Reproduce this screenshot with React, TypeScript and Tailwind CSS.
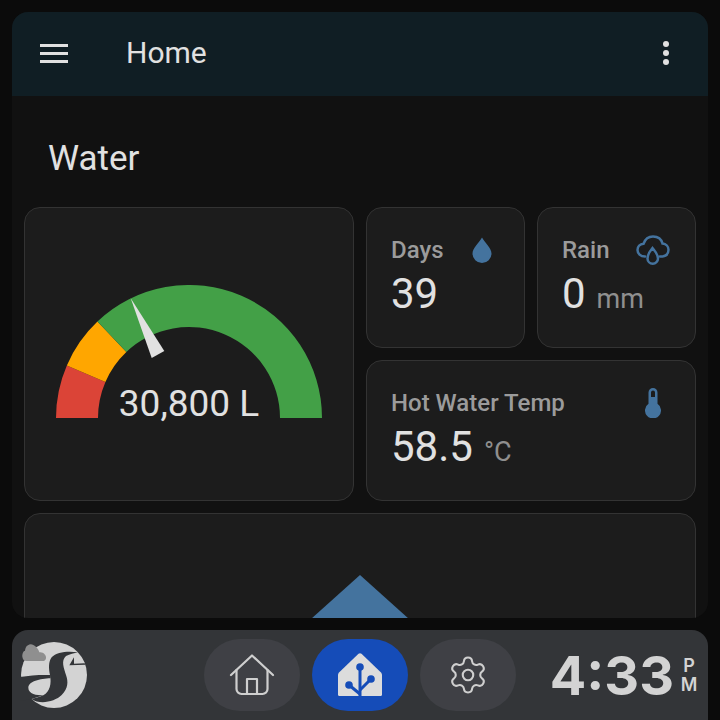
import { Settings } from 'lucide-react';

const font = { roboto: "font-['Roboto',sans-serif]" };

function polar(r: number, deg: number) {
  const a = (deg * Math.PI) / 180;
  return { x: 133 - r * Math.cos(a), y: 133 - r * Math.sin(a) };
}

function arcSegment(from: number, to: number) {
  const R = 133;
  const r = 91;
  const a = polar(R, from);
  const b = polar(R, to);
  const c = polar(r, to);
  const d = polar(r, from);
  return `M${a.x} ${a.y}A${R} ${R} 0 0 1 ${b.x} ${b.y}L${c.x} ${c.y}A${r} ${r} 0 0 0 ${d.x} ${d.y}Z`;
}

function Gauge() {
  return (
    <div className="relative w-[266px] h-[133px]">
      <svg width="266" height="133" viewBox="0 0 266 133" className="block">
        <path d={arcSegment(0, 23.3)} fill="#db4437" />
        <path d={arcSegment(23.3, 46.5)} fill="#ffa600" />
        <path d={arcSegment(46.5, 180)} fill="#43a047" />
        <polygon points="74.7,13.3 95.7,73 108.3,66" fill="#e1e1e1" />
      </svg>
      <div className="absolute left-0 right-0 bottom-[-7px] text-center text-[37px] leading-[42px] text-[#e1e1e1]">
        30,800 L
      </div>
    </div>
  );
}

function Card({ className, children }: { className?: string; children: React.ReactNode }) {
  return (
    <div className={`bg-[#1c1c1c] border border-[#333333] rounded-2xl h-[141px] ${className ?? ''}`}>{children}</div>
  );
}

function StatCard({
  label,
  value,
  unit,
  icon,
  className,
}: {
  label: string;
  value: string;
  unit?: string;
  icon: React.ReactNode;
  className?: string;
}) {
  return (
    <Card className={`px-[24px] pt-[25px] ${className ?? ''}`}>
      <div className="flex items-center justify-between h-[34px]">
        <span className="text-[24px] leading-[34px] font-medium text-[#9b9b9b]">{label}</span>
        {icon}
      </div>
      <div className="flex items-baseline gap-[11px] mt-[3px]">
        <span className="text-[42px] leading-[48px] text-[#e1e1e1]">{value}</span>
        {unit && <span className="text-[27px] leading-[32px] text-[#8f8f8f]">{unit}</span>}
      </div>
    </Card>
  );
}

function DropIcon() {
  return (
    <svg width="20" height="26" viewBox="0 0 20 26" className="mr-[8px]">
      <path d="M10 .500C7 6 .500 11 .500 16.500A9.500 9.500 0 0 0 19.500 16.500C19.500 11 13 6 10 .500Z" fill="#44739e" />
    </svg>
  );
}

function RainCloudIcon() {
  return (
    <svg width="34" height="31" viewBox="0 0 34 31" className="mr-[1px]" fill="none" stroke="#44739e" strokeWidth="2.500">
      <path d="M9 21.500C4.500 21.500 1.500 18.500 1.500 15C1.500 11.500 4 9 7.500 8.800C9 4.500 12.500 1.500 17 1.500C22 1.500 25.500 4.500 26.500 8.500C30 8.800 32.500 11.500 32.500 14.800C32.500 18.500 30 21 26.500 21.500H24" strokeLinecap="round" />
      <path d="M16.500 13C14 16 11.500 19 11.500 23.500A5.200 5.200 0 0 0 22 23.500C22 19 19 16 16.500 13Z" />
    </svg>
  );
}

function ThermometerIcon() {
  return (
    <svg width="16" height="30" viewBox="0 0 16 30" className="mr-[10px]">
      <path
        fillRule="evenodd"
        d="M8 0A4.500 4.500 0 0 0 3.500 4.500V15.800A8 8 0 1 0 12.500 15.800V4.500A4.500 4.500 0 0 0 8 0ZM8 2.500A2 2 0 0 1 10 4.500V9H6V4.500A2 2 0 0 1 8 2.500Z"
        fill="#44739e"
      />
    </svg>
  );
}

function HomeOutline() {
  return (
    <svg width="46" height="46" viewBox="0 0 46 46" fill="none" stroke="#cfcfcf" strokeWidth="2.200" strokeLinecap="round" strokeLinejoin="round">
      <path d="M2 23L23 3.500L44 23" />
      <path d="M7.500 18V37A5 5 0 0 0 12.500 42H33.500A5 5 0 0 0 38.500 37V18" />
      <path d="M18 42V27H28V42" />
    </svg>
  );
}

function HaIcon() {
  return (
    <svg width="44" height="44" viewBox="0 0 44 44">
      <path d="M20.500 .800Q22 -.200 23.500 .800L43 19.500Q44 20.500 44 22V41.500Q44 43 42.500 43H1.500Q0 43 0 41.500V22Q0 20.500 1 19.500Z" fill="#dcdcdc" />
      <g stroke="#154cb8" strokeWidth="3" fill="none">
        <path d="M22 14V43" />
        <path d="M11 32L22 41" />
        <path d="M33 26L22 37" />
      </g>
      <circle cx="22" cy="14" r="3.800" fill="#154cb8" />
      <circle cx="11" cy="32" r="3.800" fill="#154cb8" />
      <circle cx="33" cy="26" r="3.800" fill="#154cb8" />
    </svg>
  );
}

function Logo() {
  return (
    <svg width="70" height="70" viewBox="60 60 210 210" className="shrink-0">
      <circle cx="162" cy="165" r="99" fill="#d3d3d3" />
      <g fill="#333538">
        {/* dark S */}
        <path d="M234 97C205 93 170 95 155 112C145 125 146 145 150 165C155 190 150 215 130 226C118 232 105 235 95 237C120 255 165 245 185 225C205 205 205 185 198 165C192 145 182 122 198 108C210 102 222 100 234 97Z" />
        {/* notch on the right rim */}
        <path d="M222 112L208 136L256 134L254 130L222 131Z" />
        {/* left arm and the rim cut below it */}
        <path d="M55 172C85 166 120 164 152 165L152 175C120 176 85 184 85 203C85 222 110 226 130 226L95 237L50 245Z" />
      </g>
      <path d="M80 123H128C138 123 141 112 135 104C130 98 124 96 118 97C114 80 94 66 84 76C78 78 76 86 75 92C70 92 66 102 67 110C68 118 72 123 80 123Z" fill="#8f8f8f" />
    </svg>
  );
}

function NavPill({ active, children }: { active?: boolean; children: React.ReactNode }) {
  return (
    <div
      className={`w-[96px] h-[72px] rounded-[36px] flex items-center justify-center ${
        active ? 'bg-[#154cb8]' : 'bg-[#3f4045]'
      }`}
    >
      {children}
    </div>
  );
}

export default function App() {
  return (
    <div className={`w-[720px] h-[720px] bg-[#0b0b0b] flex flex-col gap-[12px] px-[12px] pt-[12px] overflow-hidden ${font.roboto}`}>
      <div className="h-[606px] shrink-0 bg-[#111111] rounded-2xl overflow-hidden flex flex-col">
        <header className="h-[84px] shrink-0 bg-[#101e24] flex items-center pl-[28px] pr-[39px] pb-[2px] text-[#e1e1e1]">
          <div className="w-[28px] flex flex-col gap-[5px]">
            <div className="h-[3px] bg-[#e1e1e1]" />
            <div className="h-[3px] bg-[#e1e1e1]" />
            <div className="h-[3px] bg-[#e1e1e1]" />
          </div>
          <h1 className="ml-[58px] text-[30px] leading-[34px] flex-1">Home</h1>
          <div className="flex flex-col gap-[3px]">
            <div className="w-[6px] h-[6px] rounded-full bg-[#e1e1e1]" />
            <div className="w-[6px] h-[6px] rounded-full bg-[#e1e1e1]" />
            <div className="w-[6px] h-[6px] rounded-full bg-[#e1e1e1]" />
          </div>
        </header>

        <div className="px-[12px]">
          <h2 className="pl-[24px] pt-[43px] pb-[28px] text-[35px] leading-[40px] text-[#e1e1e1]">Water</h2>

          <div className="grid grid-cols-[330px_159px_159px] gap-[12px]">
            <div className="row-span-2 bg-[#1c1c1c] border border-[#333333] rounded-2xl flex justify-center pt-[77px]">
              <Gauge />
            </div>
            <StatCard label="Days" value="39" icon={<DropIcon />} />
            <StatCard label="Rain" value="0" unit="mm" icon={<RainCloudIcon />} />
            <StatCard label="Hot Water Temp" value="58.5" unit="°C" icon={<ThermometerIcon />} className="col-span-2" />
            <div className="col-span-3 h-[141px] bg-[#1c1c1c] border border-[#333333] rounded-2xl flex justify-center pt-[61px]">
              <svg width="98" height="80" viewBox="0 0 98 80">
                <polygon points="49,0 98,44 98,80 0,80 0,44" fill="#44739e" />
              </svg>
            </div>
          </div>
        </div>
      </div>

      <div className="h-[90px] shrink-0 bg-[#333538] rounded-t-2xl flex items-center pl-[8px] pr-[11px]">
        <Logo />
        <div className="ml-[114px] flex gap-[12px]">
          <NavPill>
            <HomeOutline />
          </NavPill>
          <NavPill active>
            <HaIcon />
          </NavPill>
          <NavPill>
            <Settings size={42} strokeWidth={1.2} color="#cfcfcf" />
          </NavPill>
        </div>
        <div className="ml-auto flex items-center font-['Inter',sans-serif] text-[#d3d3d3]">
          <span className="text-[54px] leading-[60px] font-bold pt-[1px]">4:33</span>
          <span className="ml-[7px] w-[16px] flex flex-col items-center text-[18px] leading-[19px] font-semibold">
            <span>P</span>
            <span>M</span>
          </span>
        </div>
      </div>
    </div>
  );
}
